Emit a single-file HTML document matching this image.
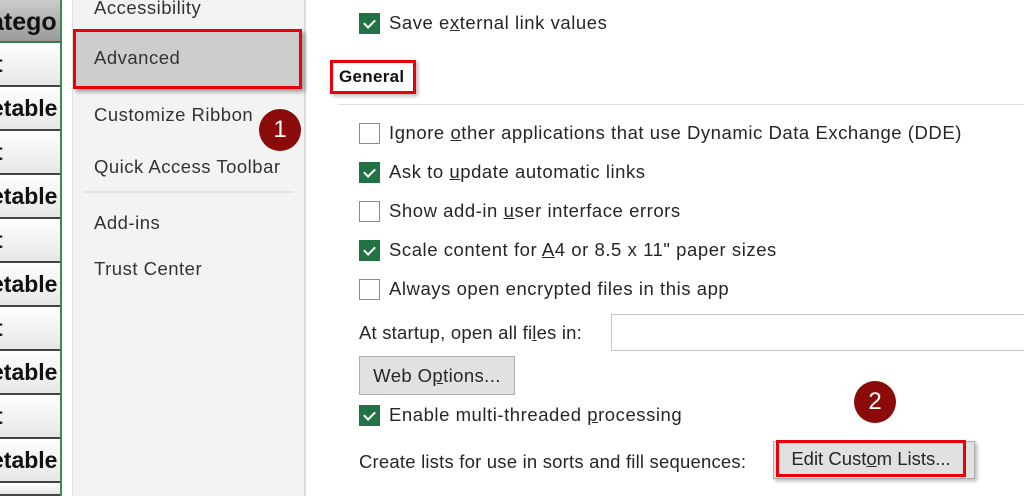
<!DOCTYPE html>
<html><head><meta charset="utf-8"><style>
*{margin:0;padding:0;box-sizing:border-box}
body{width:1024px;height:496px;overflow:hidden;background:#fff;position:relative;font-family:"Liberation Sans",sans-serif;color:#262626}
.a{position:absolute;white-space:nowrap}
.cell{position:absolute;left:0;width:61px;height:44px;border-bottom:2px solid #444;background:linear-gradient(#fff,#e6e6e6);font-weight:bold;font-size:23px;color:#111;line-height:42px;overflow:hidden}
.side{font-size:18.5px;color:#333;letter-spacing:.5px}
.t{font-size:18.5px;color:#262626;letter-spacing:.55px}
.cb{position:absolute;left:359px;width:21px;height:21px;border:1px solid #8a8a8a;background:#fff}
.cb.on{background:#217346;border-color:#217346}
.cb.on::after{content:"";position:absolute;left:6px;top:3px;width:5px;height:9px;border:solid #fff;border-width:0 2px 2px 0;transform:rotate(45deg)}
.badge{position:absolute;width:42px;height:42px;border-radius:50%;background:#8b0a0a;color:#fff;font-size:24px;text-align:center;line-height:42px}
.btn{position:absolute;background:#e1e1e1;border:1px solid #adadad;font-size:18.5px;color:#262626;text-align:center;letter-spacing:.4px}
</style></head><body>
<div class="a" style="left:0;top:0;width:61px;height:43px;background:linear-gradient(#ccc,#9a9a9a);border-bottom:2px solid #3a7a4a;font-weight:bold;font-size:25px;line-height:44px;color:#111;overflow:hidden;text-indent:-10px">atego</div>
<div class="cell" style="top:43px;text-indent:-5px">t</div>
<div class="cell" style="top:87px;text-indent:-9px">etable</div>
<div class="cell" style="top:131px;text-indent:-5px">t</div>
<div class="cell" style="top:175px;text-indent:-9px">etable</div>
<div class="cell" style="top:219px;text-indent:-5px">t</div>
<div class="cell" style="top:263px;text-indent:-9px">etable</div>
<div class="cell" style="top:307px;text-indent:-5px">t</div>
<div class="cell" style="top:351px;text-indent:-9px">etable</div>
<div class="cell" style="top:395px;text-indent:-5px">t</div>
<div class="cell" style="top:439px;text-indent:-9px">etable</div>
<div class="cell" style="top:483px;height:13px"></div>
<div class="a" style="left:60px;top:0;width:2px;height:496px;background:#3a8a5a"></div>
<div class="a" style="left:72px;top:0;width:234px;height:496px;background:#f3f3f3;border-right:2px solid #dcdcdc;border-left:1px solid #e0e0e0"></div>
<div class="a side" style="left:94px;top:-3px">Accessibility</div>
<div class="a" style="left:73px;top:29px;width:229px;height:60px;background:#cdcdcd;border:3px solid #e8000b;box-shadow:3px 3px 4px rgba(0,0,0,.35)"></div>
<div class="a side" style="left:94px;top:47px">Advanced</div>
<div class="a side" style="left:94px;top:104px">Customize Ribbon</div>
<div class="a side" style="left:94px;top:156px">Quick Access Toolbar</div>
<div class="a" style="left:83px;top:191px;width:211px;height:2px;background:#e2e2e2"></div>
<div class="a side" style="left:94px;top:212px">Add-ins</div>
<div class="a side" style="left:94px;top:258px">Trust Center</div>
<div class="badge" style="left:259px;top:109px">1</div>
<div class="cb on" style="top:13px"></div><div class="a t" style="left:389px;top:12px">Save e<u>x</u>ternal link values</div>
<div class="a" style="left:330px;top:60px;width:86px;height:34px;border:3px solid #e8000b;box-shadow:2px 2px 4px rgba(0,0,0,.3)"></div>
<div class="a" style="left:339px;top:67px;font-weight:bold;font-size:17px;color:#111;letter-spacing:.3px">General</div>
<div class="a" style="left:338px;top:104px;width:686px;height:1px;background:#e1e1e1"></div>
<div class="cb" style="top:123px"></div><div class="a t" style="left:389px;top:122px">Ignore <u>o</u>ther applications that use Dynamic Data Exchange (DDE)</div>
<div class="cb on" style="top:162px"></div><div class="a t" style="left:389px;top:161px">Ask to <u>u</u>pdate automatic links</div>
<div class="cb" style="top:201px"></div><div class="a t" style="left:389px;top:200px">Show add-in <u>u</u>ser interface errors</div>
<div class="cb on" style="top:240px"></div><div class="a t" style="left:389px;top:239px">Scale content for <u>A</u>4 or 8.5 x 11" paper sizes</div>
<div class="cb" style="top:279px"></div><div class="a t" style="left:389px;top:278px">Always open encrypted files in this app</div>
<div class="a t" style="left:359px;top:322px;letter-spacing:.2px">At startup, open all fi<u>l</u>es in:</div>
<div class="a" style="left:611px;top:314px;width:420px;height:37px;border:1px solid #c6c6c6;background:#fff"></div>
<div class="btn" style="left:359px;top:356px;width:156px;height:39px;line-height:37px">Web O<u>p</u>tions...</div>
<div class="cb on" style="top:405px"></div><div class="a t" style="left:389px;top:404px">Enable multi-threaded <u>p</u>rocessing</div>
<div class="badge" style="left:854px;top:381px">2</div>
<div class="a t" style="left:359px;top:451px;letter-spacing:.2px">Create lists for use in sorts and fill sequences:</div>
<div class="btn" style="left:773px;top:441px;width:202px;height:38px;box-shadow:2px 2px 4px rgba(0,0,0,.3)"></div>
<div class="a" style="left:776px;top:440px;width:190px;height:37px;border:3px solid #e8000b;font-size:18.5px;line-height:31px;text-align:center;color:#262626">Edit Cust<u>o</u>m Lists...</div>
</body></html>
